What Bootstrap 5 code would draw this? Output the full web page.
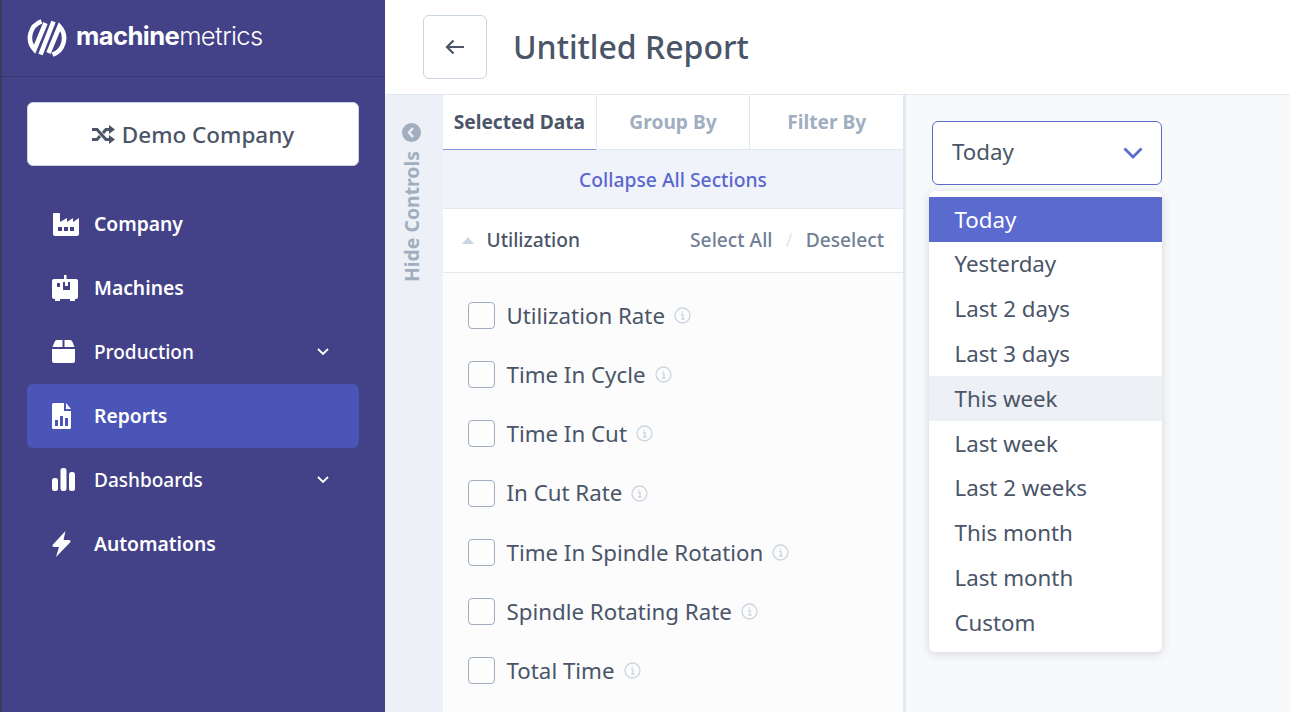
<!DOCTYPE html>
<html lang="en">
<head>
<meta charset="UTF-8">
<title>Untitled Report</title>
<link href="https://cdn.jsdelivr.net/npm/bootstrap@5.3.2/dist/css/bootstrap.min.css" rel="stylesheet">
<style>
html, body { height: 100%; overflow: hidden; }
body { font-family: "Noto Sans", sans-serif; color: #4a5568; background: #f8f9fb; }
.app-shell { height: 712px; width: 1290px; }

/* sidebar */
.side { width: 385px; background: #434289; border-left: 2px solid #3a3a5e; flex: none; }
.side-brand { height: 77px; border-bottom: 1px solid #37366f; padding: 14px 0 0 25px; gap: 9px; }
.brand-text { font-family: "Inter", sans-serif; font-size: 25.6px; letter-spacing: -.6px; color: #fff; font-weight: 700; line-height: 44px; }
.brand-text span { font-weight: 300; }
.company-btn { margin: 25px 26px 0 25px; height: 64px; width: 332px; background: #fff; border: 1px solid #cbd5e0; border-radius: 6px; font-size: 22.5px; font-weight: 500; color: #4a5568; gap: 7px; padding-top: 2px; }
.side-menu { margin: 26px 26px 0 25px; width: 332px; }
.side-link { height: 64px; padding-left: 25px; color: #fff; font-size: 19.3px; font-weight: 600; border-radius: 6px; text-decoration: none; }
.side-link:hover { color: #fff; }
.side-link.current { background: #4a55b7; }
.side-link.has-sub { font-weight: 500; font-size: 19px; }
.side-icon { width: 28px; height: 28px; margin-right: 14px; flex: none; }
.side-caret { margin-left: auto; margin-right: 30px; }

/* header */
.top-head { height: 95px; background: #fff; border-bottom: 1px solid #e2e8f0; padding-left: 38px; flex: none; }
.back-btn { width: 64px; height: 64px; background: #fff; border: 1px solid #cbd5e0; border-radius: 6px; }
.report-name { font-size: 32px; font-weight: 500; color: #4a5568; margin: 0 0 0 26px; }

/* controls */
.hide-strip { width: 58px; background: #edf0f6; flex: none; padding: 28px 6px 0 0; color: #a0aec0; }
.hide-label { writing-mode: vertical-rl; transform: rotate(180deg); font-size: 19.4px; font-weight: 700; margin: 9px 0 0 2px; line-height: 20px; }
.controls { width: 463px; flex: none; border-right: 3px solid #e2e8f0; background: #fcfcfd; }
.tab-row { height: 55px; background: #fff; }
.tab-cell { flex: 1; font-size: 19.2px; font-weight: 700; color: #a0aec0; border-bottom: 1px solid #e2e8f0; border-left: 1px solid #e2e8f0; }
.tab-cell:first-child { border-left: 0; color: #4a5568; border-bottom-color: #7f93dc; }
.collapse-row { height: 59px; background: #f1f3fb; color: #5a67d0; font-size: 19.3px; font-weight: 500; border-bottom: 1px solid #e2e8f0; padding-top: 2px; }
.section-row { height: 64px; background: #fff; border-bottom: 1px solid #e2e8f0; padding: 0 19px; font-size: 19.2px; }
.section-caret { width: 0; height: 0; border-left: 6px solid transparent; border-right: 6px solid transparent; border-bottom: 7px solid #cbd5e0; margin-right: 12.500px; }
.section-name { font-weight: 500; color: #4a5568; }
.section-act { color: #718096; font-weight: 500; }
.section-sep { color: #e2e8f0; margin: 0 13px; }
.metric-list { padding-top: 13px; }
.metric-row { height: 59.2px; padding-left: 25px; font-size: 22.3px; color: #4a5568; }
.metric-box { width: 27px; height: 27px; border: 1px solid #a0aec0; border-radius: 4px; background: #fdfdfe; margin-right: 11.500px; flex: none; }
.metric-info { margin-left: 9px; flex: none; }

/* range picker */
.range-pane { padding: 26px 0 0 26px; position: relative; flex: 1; }
.range-select { width: 230px; height: 64px; background: #fff; border: 1px solid #5a6acf; border-radius: 6px; padding: 0 18px 3px 19px; font-size: 22.3px; }
.range-select svg { margin-top: 3px; }
.range-menu { position: absolute; left: 23px; top: 96px; width: 233px; height: 461px; background: #fff; border-radius: 6px; padding-top: 6px; box-shadow: 0 2px 10px rgba(45,55,72,.18); }
.range-item { height: 44.8px; padding-left: 25.500px; font-size: 22.3px; color: #4a5568; }
.range-item.picked { background: #5a6acf; color: #fff; }
.range-item.hovered { background: #edf0f5; }
</style>
</head>
<body>
<div class="app-shell d-flex">
  <aside class="side">
    <div class="side-brand d-flex align-items-start">
      <svg width="40" height="40" viewBox="0 0 40 40" class="mt-1" fill="none" stroke="#fff" stroke-width="4.600">
        <path d="M14.500 3.300A17.500 17.500 0 0 0 7.500 31.500L18.500 5"/>
        <path d="M26.500 3.500L13.500 36.500"/>
        <path d="M25.500 36.700A17.500 17.500 0 0 0 32.500 8.500L21.500 35"/>
      </svg>
      <div class="brand-text">machine<span>metrics</span></div>
    </div>
    <button class="company-btn d-flex align-items-center justify-content-center" type="button">
      <svg width="23" height="19" viewBox="0 0 23 19" fill="none" stroke="#4a5568" stroke-width="3">
        <path d="M0 4.500H5L14 14.500H18"/><path d="M0 14.500H5L8 11"/><path d="M11 8L14 4.500H18"/>
        <path d="M17 0L23 4.500L17 9Z" fill="#4a5568" stroke="none"/><path d="M17 10L23 14.500L17 19Z" fill="#4a5568" stroke="none"/>
      </svg>
      Demo Company
    </button>
    <nav class="side-menu">
      <a class="side-link d-flex align-items-center" href="#">
        <svg class="side-icon" viewBox="0 0 28 28" fill="#fff"><path fill-rule="evenodd" d="M1 4Q1 3 2 3H7Q8 3 8 4V12L15 8V12L21 8V12L27 8V24Q27 26 25 26H3Q1 26 1 24ZM6 17V21H10V17ZM12 17V21H16V17ZM18 17V21H22V17Z"/></svg>
        Company
      </a>
      <a class="side-link d-flex align-items-center" href="#">
        <svg class="side-icon" viewBox="0 0 28 28" fill="#fff"><path fill-rule="evenodd" d="M12 1H14.500V5H24Q26 5 26 7V23Q26 25 24 25H23V27H18V25H8V27H3V25H2Q0 25 0 23V7Q0 5 2 5H12ZM5 9V13H8V9ZM11 8V16H18V8H16V12H13V8Z"/></svg>
        Machines
      </a>
      <a class="side-link has-sub d-flex align-items-center" href="#">
        <svg class="side-icon" viewBox="0 0 28 28" fill="#fff"><path d="M5 2H10.500V9H0.500L2.500 4Q3.300 2 5 2ZM12.500 2H18Q19.700 2 20.500 4L22.500 9H12.500ZM0 11H23V23Q23 25 21 25H2Q0 25 0 23Z"/></svg>
        Production
        <svg class="side-caret" width="12" height="8" viewBox="0 0 12 8" fill="none" stroke="#fff" stroke-width="1.800"><path d="M1 1L6 6L11 1"/></svg>
      </a>
      <a class="side-link current d-flex align-items-center" href="#">
        <svg class="side-icon" viewBox="0 0 28 28" fill="#fff"><path fill-rule="evenodd" d="M1.500 1H12V9H19V25.500Q19 27 17.500 27H1.500Q0 27 0 25.500V2.500Q0 1 1.500 1ZM3 18V24H6V18ZM8 14V24H11V14ZM13 16V24H16V16Z"/><path d="M14 1L19 7H14Z"/></svg>
        Reports
      </a>
      <a class="side-link has-sub d-flex align-items-center" href="#">
        <svg class="side-icon" viewBox="0 0 28 28" fill="#fff"><rect x="0" y="12" width="6" height="13" rx="2.500"/><rect x="8.500" y="2" width="6" height="23" rx="2.500"/><rect x="17" y="6" width="6" height="19" rx="2.500"/></svg>
        Dashboards
        <svg class="side-caret" width="12" height="8" viewBox="0 0 12 8" fill="none" stroke="#fff" stroke-width="1.800"><path d="M1 1L6 6L11 1"/></svg>
      </a>
      <a class="side-link d-flex align-items-center" href="#">
        <svg class="side-icon" viewBox="0 0 28 28" fill="#fff"><path d="M13.500 1L0.500 15Q0 17 2 17H7L4 27L18.500 12Q19 10 17 10H11.500Z"/></svg>
        Automations
      </a>
    </nav>
  </aside>

  <main class="flex-grow-1 d-flex flex-column">
    <header class="top-head d-flex align-items-center">
      <button class="back-btn d-flex align-items-center justify-content-center" type="button">
        <svg width="20" height="16" viewBox="0 0 20 16" fill="none" stroke="#4a5568" stroke-width="2.200"><path d="M19 8H2M8.500 1.500L2 8L8.500 14.500"/></svg>
      </button>
      <h1 class="report-name">Untitled Report</h1>
    </header>
    <div class="d-flex flex-grow-1">
      <div class="hide-strip d-flex flex-column align-items-center">
        <svg width="19" height="19" viewBox="0 0 19 19"><circle cx="9.500" cy="9.500" r="9.500" fill="#a0aec0"/><path d="M11 5L7 9.500L11 14" fill="none" stroke="#edf0f6" stroke-width="2.400"/></svg>
        <div class="hide-label">Hide Controls</div>
      </div>
      <section class="controls">
        <div class="tab-row d-flex">
          <div class="tab-cell d-flex align-items-center justify-content-center">Selected Data</div>
          <div class="tab-cell d-flex align-items-center justify-content-center">Group By</div>
          <div class="tab-cell d-flex align-items-center justify-content-center">Filter By</div>
        </div>
        <div class="collapse-row d-flex align-items-center justify-content-center">Collapse All Sections</div>
        <div class="section-row d-flex align-items-center">
          <span class="section-caret"></span>
          <span class="section-name">Utilization</span>
          <span class="section-act ms-auto">Select All</span>
          <span class="section-sep">/</span>
          <span class="section-act">Deselect</span>
        </div>
        <div class="metric-list" id="metricList"></div>
      </section>
      <section class="range-pane">
        <div class="range-select d-flex align-items-center justify-content-between">
          Today
          <svg width="20" height="12" viewBox="0 0 20 12" fill="none" stroke="#5a6acf" stroke-width="2.800"><path d="M1.500 1.500L10 10L18.500 1.500"/></svg>
        </div>
        <div class="range-menu">
          <div class="range-item picked d-flex align-items-center">Today</div>
          <div class="range-item d-flex align-items-center">Yesterday</div>
          <div class="range-item d-flex align-items-center">Last 2 days</div>
          <div class="range-item d-flex align-items-center">Last 3 days</div>
          <div class="range-item hovered d-flex align-items-center">This week</div>
          <div class="range-item d-flex align-items-center">Last week</div>
          <div class="range-item d-flex align-items-center">Last 2 weeks</div>
          <div class="range-item d-flex align-items-center">This month</div>
          <div class="range-item d-flex align-items-center">Last month</div>
          <div class="range-item d-flex align-items-center">Custom</div>
        </div>
      </section>
    </div>
  </main>
</div>
<script src="https://cdn.jsdelivr.net/npm/bootstrap@5.3.2/dist/js/bootstrap.bundle.min.js"></script>
<script>
  var metrics = ['Utilization Rate', 'Time In Cycle', 'Time In Cut', 'In Cut Rate', 'Time In Spindle Rotation', 'Spindle Rotating Rate', 'Total Time'];
  var info = '<svg class="metric-info" width="17" height="17" viewBox="0 0 17 17"><circle cx="8.500" cy="8.500" r="7.500" fill="none" stroke="#cbd5e0" stroke-width="1.300"/><path d="M7 7.500H9V12M7 12H10.500M8.200 4.500V5.800" fill="none" stroke="#cbd5e0" stroke-width="1.300"/></svg>';
  document.getElementById('metricList').innerHTML = metrics.map(function (m) {
    return '<div class="metric-row d-flex align-items-center"><span class="metric-box"></span>' + m + info + '</div>';
  }).join('');
</script>
</body>
</html>
